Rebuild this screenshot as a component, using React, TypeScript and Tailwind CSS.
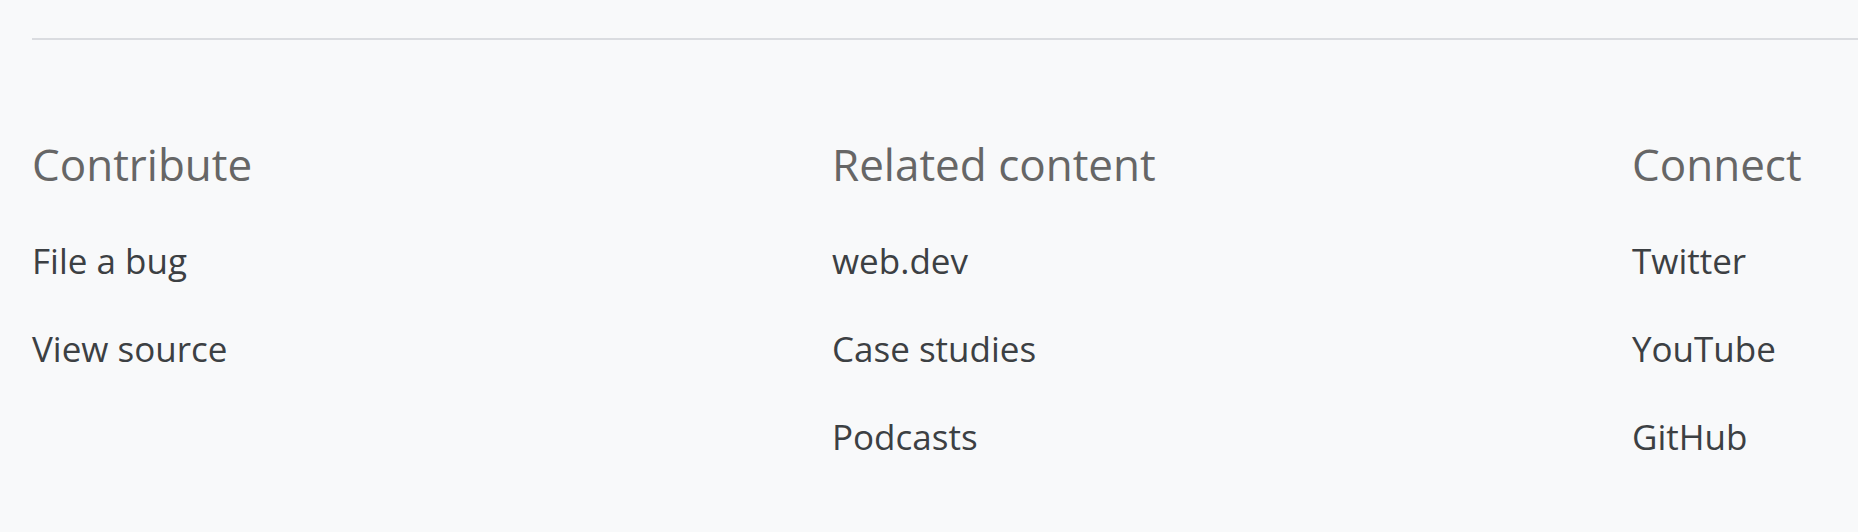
const columns = [
  { title: 'Contribute', links: ['File a bug', 'View source'] },
  { title: 'Related content', links: ['web.dev', 'Case studies', 'Podcasts'] },
  { title: 'Connect', links: ['Twitter', 'YouTube', 'GitHub'] },
];

export default function App() {
  return (
    <div
      className="h-[532px] w-full overflow-hidden bg-[#f8f9fa] pl-8 pt-[38px]"
      style={{ fontFamily: '"Open Sans", "Liberation Sans", sans-serif' }}
    >
      <div className="border-t-2 border-[#dadce0]" />
      <nav className="grid grid-cols-[800px_800px_800px] pt-[96px]">
        {columns.map((col) => (
          <section key={col.title}>
            <h3 className="text-[44px] leading-[56px] text-[#666666]">{col.title}</h3>
            <ul className="mt-[25px]">
              {col.links.map((link) => (
                <li key={link} className="text-[35px] font-medium leading-[88px] text-[#3c4043]">
                  <a href="#">{link}</a>
                </li>
              ))}
            </ul>
          </section>
        ))}
      </nav>
    </div>
  );
}
